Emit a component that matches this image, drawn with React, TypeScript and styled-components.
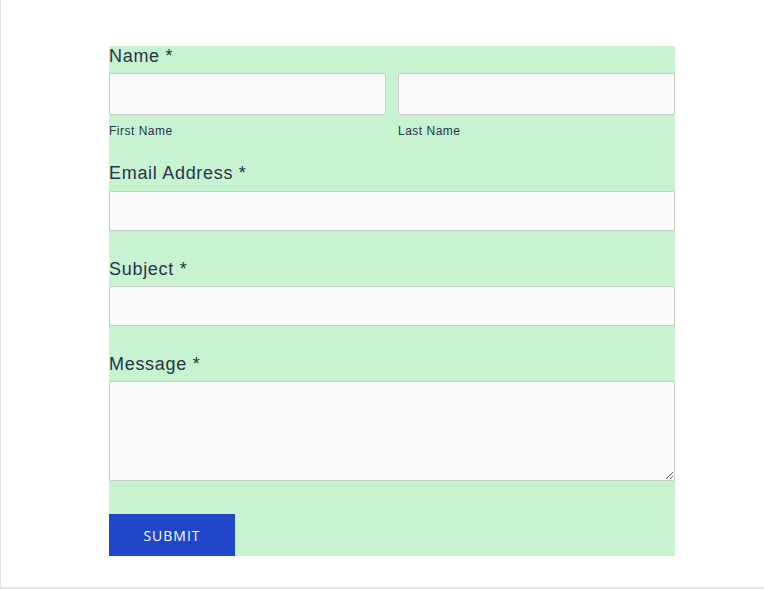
import React from "react";
import styled, { createGlobalStyle } from "styled-components";

const Global = createGlobalStyle`
  html, body { margin: 0; padding: 0; background: #ffffff; }
  body { font-family: "Liberation Sans", Arial, sans-serif; }
  * { box-sizing: border-box; }
`;

const Card = styled.div`
  height: 589px;
  border-left: 1px solid #e2e2e2;
  border-bottom: 2px solid #e4e4e4;
  padding: 46px 0 0 108px;
  background: #ffffff;
`;

const Form = styled.form`
  width: 566px;
  background: #c7f3d0;
  display: flex;
  flex-direction: column;
`;

const Field = styled.div<{ $after: number }>`
  display: flex;
  flex-direction: column;
  margin-bottom: ${(p) => p.$after}px;
`;

const Label = styled.label<{ $space: number }>`
  font-size: 18px;
  line-height: 20px;
  letter-spacing: 0.7px;
  color: #283448;
  margin-bottom: ${(p) => p.$space}px;
`;

const Row = styled.div`
  display: grid;
  grid-template-columns: 1fr 1fr;
  column-gap: 12px;
`;

const Column = styled.div`
  display: flex;
  flex-direction: column;
`;

const Input = styled.input<{ $h: number }>`
  display: block;
  width: 100%;
  height: ${(p) => p.$h}px;
  margin: 0;
  padding: 0 10px;
  background: #fafafa;
  border: 1px solid #cbcbcb;
  border-radius: 2px;
  font-family: "Liberation Sans", Arial, sans-serif;
  font-size: 14px;
  color: #283448;
  outline: none;
`;

const TextArea = styled.textarea`
  display: block;
  width: 100%;
  height: 100px;
  margin: 0;
  padding: 8px 10px;
  background: #fafafa;
  border: 1px solid #cbcbcb;
  border-radius: 2px;
  font-family: "Liberation Sans", Arial, sans-serif;
  font-size: 14px;
  resize: vertical;
  outline: none;
`;

const SubLabel = styled.span`
  margin-top: 9px;
  font-size: 12px;
  line-height: 14px;
  letter-spacing: 0.5px;
  color: #283448;
`;

const Submit = styled.button`
  width: 126px;
  height: 42px;
  margin: 0;
  padding: 0;
  border: none;
  border-radius: 0;
  background: #2046c9;
  color: #ffffff;
  font-family: "Open Sans", "Liberation Sans", sans-serif;
  font-size: 14px;
  letter-spacing: 1px;
  text-transform: uppercase;
  cursor: pointer;
`;

export default function App() {
  return (
    <>
      <Global />
      <Card>
        <Form onSubmit={(e) => e.preventDefault()}>
          <Field $after={25}>
            <Label $space={7}>Name *</Label>
            <Row>
              <Column>
                <Input $h={42} type="text" aria-label="First Name" />
                <SubLabel>First Name</SubLabel>
              </Column>
              <Column>
                <Input $h={42} type="text" aria-label="Last Name" />
                <SubLabel>Last Name</SubLabel>
              </Column>
            </Row>
          </Field>
          <Field $after={28}>
            <Label $space={8}>Email Address *</Label>
            <Input $h={40} type="email" />
          </Field>
          <Field $after={28}>
            <Label $space={7}>Subject *</Label>
            <Input $h={40} type="text" />
          </Field>
          <Field $after={33}>
            <Label $space={7}>Message *</Label>
            <TextArea />
          </Field>
          <div>
            <Submit type="submit">Submit</Submit>
          </div>
        </Form>
      </Card>
    </>
  );
}
